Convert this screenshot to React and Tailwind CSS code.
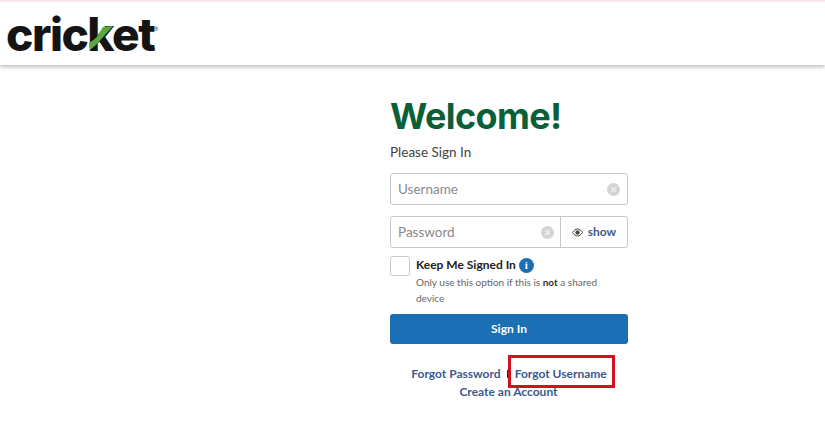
import React from "react";

function Clear() {
  return (
    <svg width="13" height="13" viewBox="0 0 13 13" className="shrink-0">
      <circle cx="6.5" cy="6.5" r="6.5" fill="#d4d4d4" />
      <path d="M4.3 4.3l4.4 4.4M8.7 4.3l-4.4 4.4" stroke="#f2f2f2" strokeWidth="1.4" />
    </svg>
  );
}

export default function App() {
  return (
    <div className="w-[825px] h-[436px] bg-white overflow-hidden text-[#333] font-['Lato','Noto_Sans',sans-serif]">
      <header className="h-[65px] border-t-2 border-[#f5e9ee] bg-white shadow-[0_2px_4px_rgba(0,0,0,0.25)] flex items-start pl-[6px] pt-[5px]">
        <div className="relative flex items-start">
          <span className="font-['Inter',sans-serif] font-extrabold text-[46px] leading-[54px] tracking-[-1.5px] text-[#141414]">cricket</span>
          <svg width="30" height="28" viewBox="0 0 30 28" className="absolute left-[80px] top-[19px]">
            <path d="M4 24 L3 17 L10 12 L17 1 L27 0 L10 19 Z" fill="#5aa83f" />
          </svg>
          <span className="text-[5px] leading-none mt-[20px] text-[#333]">®</span>
        </div>
      </header>

      <main className="w-[238px] ml-[390px] pt-[31px]">
        <h1 className="text-[36px] leading-[40px] font-bold text-[#0b5f37] font-['Inter',sans-serif] tracking-[-0.6px]">Welcome!</h1>
        <p className="mt-[6px] text-[13.5px] leading-[20px] text-[#444]">Please Sign In</p>

        <div className="mt-[11px] h-[32px] border border-[#c8c8c8] rounded-[3px] flex items-center justify-between pl-[7px] pr-[7px]">
          <span className="text-[13.5px] text-[#8a8a8a]">Username</span>
          <Clear />
        </div>

        <div className="mt-[11px] h-[32px] border border-[#c8c8c8] rounded-[3px] flex items-stretch">
          <div className="flex-1 flex items-center justify-between pl-[7px] pr-[6px]">
            <span className="text-[13.5px] text-[#8a8a8a]">Password</span>
            <Clear />
          </div>
          <div className="w-[67px] border-l border-[#c8c8c8] flex items-center justify-center gap-[5px]">
            <svg width="11" height="9" viewBox="0 0 22 16" fill="none" stroke="#444" strokeWidth="2">
              <path d="M1 8c3-4.500 6.500-7 10-7s7 2.500 10 7c-3 4.500-6.500 7-10 7S4 12.500 1 8z" />
              <circle cx="11" cy="8" r="3.500" fill="#444" />
            </svg>
            <span className="text-[12px] font-bold text-[#3b5a8c]">show</span>
          </div>
        </div>

        <div className="mt-[8px] flex items-start gap-[6px]">
          <div className="w-[20px] h-[20px] border border-[#c8c8c8] rounded-[3px] shrink-0" />
          <div className="flex-1">
            <div className="flex items-center gap-[3px] h-[18px]">
              <span className="text-[12px] font-bold text-[#222]">Keep Me Signed In</span>
              <span className="w-[15px] h-[15px] rounded-full bg-[#1a6fb5] text-white text-[11px] font-bold flex items-center justify-center font-['Liberation_Serif',serif]">i</span>
            </div>
            <p className="max-w-[195px] text-[10px] leading-[16px] text-[#666]">
              Only use this option if this is <b className="text-[#333]">not</b> a shared device
            </p>
          </div>
        </div>

        <button className="mt-[8px] w-full h-[30px] bg-[#1a6fb5] rounded-[3px] text-white text-[12px] font-bold">Sign In</button>

        <div className="mt-[21px] flex justify-center items-center relative h-[18px] text-[12px] font-bold text-[#3b5a8c]">
          <span>Forgot Password</span>
          <span className="w-[2px] h-[8px] bg-[#222] mx-[6px]" />
          <span>Forgot Username</span>
          <div className="absolute left-[118px] top-[-10px] w-[107px] h-[33px] border-[3px] border-[#d0121f]" />
        </div>
        <div className="text-center text-[12px] leading-[18px] font-bold text-[#3b5a8c] pr-[1px]">Create an Account</div>
      </main>
    </div>
  );
}
